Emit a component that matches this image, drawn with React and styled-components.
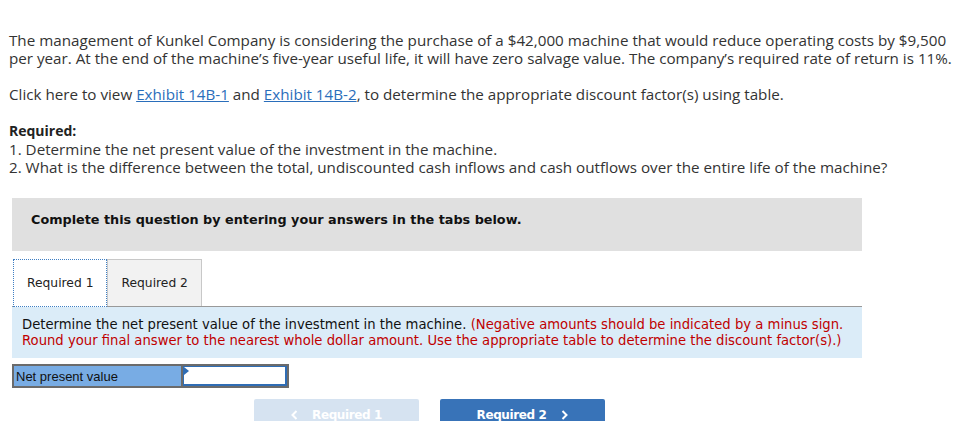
import React from "react";
import styled, { createGlobalStyle } from "styled-components";

const Global = createGlobalStyle`
  html, body { margin: 0; padding: 0; background: #fff; }
  body { overflow: hidden; }
`;

const Page = styled.div`
  padding: 31px 0 0 9px;
  width: 960px;
  box-sizing: border-box;
`;

const Para = styled.p`
  margin: 0 0 ${(p) => p.$mb ?? 18}px 0;
  font-family: "Open Sans", "Lato", sans-serif;
  font-size: 15.2px;
  line-height: 18px;
  color: #333;
`;

const Link = styled.a`
  color: #2a6ebb;
  text-decoration: underline;
  cursor: pointer;
`;

const Strong = styled.strong`
  font-weight: 700;
  font-size: 14px;
  color: #222;
`;

const Question = styled.div`
  margin: 22px 0 0 3px;
  width: 850px;
`;

const Banner = styled.div`
  background: #e0e0e0;
  height: 53px;
  box-sizing: border-box;
  padding: 14px 0 0 19px;
  font-family: "DejaVu Sans", Verdana, sans-serif;
  font-weight: 700;
  font-size: 12.8px;
  line-height: 16px;
  color: #111;
`;

const Tabs = styled.div`
  margin-top: 8px;
  display: flex;
  border-bottom: 1px solid #999;
  height: 47px;
`;

const Tab = styled.div`
  box-sizing: border-box;
  display: flex;
  align-items: center;
  justify-content: center;
  font-family: "DejaVu Sans", Verdana, sans-serif;
  font-size: 12.3px;
  color: #222;
  padding: 0 13px;
  margin-left: ${(p) => (p.$first ? 1 : 0)}px;
  background: ${(p) => (p.$active ? "#fff" : "#f2f2f2")};
  border: ${(p) => (p.$active ? "1px dotted #3f7fc4" : "1px solid #c8c8c8")};
  border-bottom: ${(p) => (p.$active ? "1px dotted #3f7fc4" : "none")};
  margin-bottom: ${(p) => (p.$active ? -1 : 0)}px;
  height: ${(p) => (p.$active ? 48 : 47)}px;
`;

const Instructions = styled.div`
  background: #dbecf8;
  padding: 10px 10px 8px 10px;
  font-family: "DejaVu Sans", Verdana, sans-serif;
  font-size: 13.2px;
  line-height: 16px;
  color: #111;
  height: 51px;
  box-sizing: border-box;
`;

const Red = styled.span`
  color: #c00000;
`;

const AnswerRow = styled.div`
  margin-top: 6px;
  display: flex;
  height: 24px;
`;

const Label = styled.div`
  width: 169px;
  box-sizing: border-box;
  background: #78ace4;
  border: 2px solid #6b6b6b;
  border-right: none;
  font-family: "Liberation Sans", Arial, sans-serif;
  font-size: 13px;
  color: #111;
  display: flex;
  align-items: center;
  padding-left: 2px;
`;

const InputCell = styled.div`
  position: relative;
  width: 108px;
  box-sizing: border-box;
  border: 2px solid #6b6b6b;
  background: #6b6b6b;
  display: flex;
`;

const Input = styled.input`
  flex: 1;
  min-width: 0;
  border: 2px solid #2f6db5;
  border-left-width: 1px;
  border-top-width: 1px;
  background: #fff;
  margin: 0;
  padding: 0;
  outline: none;
`;

const Flag = styled.span`
  position: absolute;
  left: 1px;
  top: 1px;
  width: 0;
  height: 0;
  border-top: 4px solid transparent;
  border-bottom: 4px solid transparent;
  border-left: 5px solid #2f6db5;
`;

const Nav = styled.div`
  margin-top: 11px;
  margin-left: 242px;
  display: flex;
  gap: 21px;
`;

const NavButton = styled.button`
  width: 165px;
  height: 30px;
  border: none;
  border-radius: 2px 2px 0 0;
  background: ${(p) => (p.$disabled ? "#d6e3f1" : "#3873b8")};
  color: #fff;
  font-family: "DejaVu Sans", Verdana, sans-serif;
  font-weight: 700;
  font-size: 12px;
  letter-spacing: -0.4px;
  line-height: 14px;
  display: flex;
  justify-content: center;
  align-items: flex-start;
  padding: 9px 0 0 0;
  gap: ${(p) => (p.$disabled ? 14 : 15)}px;
  cursor: pointer;
`;

const Chevron = styled.svg`
  width: 7px;
  height: 10px;
  margin-top: 2px;
  flex: none;
`;

function ChevronIcon({ dir }) {
  const d = dir === "left" ? "M5.5 1 L1.5 5 L5.5 9" : "M1.5 1 L5.5 5 L1.5 9";
  return (
    <Chevron viewBox="0 0 7 10">
      <path d={d} fill="none" stroke="#fff" strokeWidth="2" />
    </Chevron>
  );
}

export default function App() {
  return (
    <>
      <Global />
      <Page>
        <Para>
          The management of Kunkel Company is considering the purchase of a $42,000 machine that would reduce operating costs by $9,500 per year. At the end of the machine’s five-year useful life, it will have zero salvage value. The company’s required rate of return is 11%.
        </Para>
        <Para>
          Click here to view <Link>Exhibit 14B-1</Link> and <Link>Exhibit 14B-2</Link>, to determine the appropriate discount factor(s) using table.
        </Para>
        <Para $mb={0}>
          <Strong>Required:</Strong>
          <br />
          1. Determine the net present value of the investment in the machine.
          <br />
          2. What is the difference between the total, undiscounted cash inflows and cash outflows over the entire life of the machine?
        </Para>
        <Question>
          <Banner>Complete this question by entering your answers in the tabs below.</Banner>
          <Tabs>
            <Tab $active $first>Required 1</Tab>
            <Tab>Required 2</Tab>
          </Tabs>
          <Instructions>
            Determine the net present value of the investment in the machine.{" "}
            <Red>
              (Negative amounts should be indicated by a minus sign. Round your final answer to the nearest whole dollar amount. Use the appropriate table to determine the discount factor(s).)
            </Red>
          </Instructions>
          <AnswerRow>
            <Label>Net present value</Label>
            <InputCell>
              <Input type="text" />
              <Flag />
            </InputCell>
          </AnswerRow>
          <Nav>
            <NavButton $disabled>
              <ChevronIcon dir="left" />
              <span>Required 1</span>
            </NavButton>
            <NavButton>
              <span>Required 2</span>
              <ChevronIcon dir="right" />
            </NavButton>
          </Nav>
        </Question>
      </Page>
    </>
  );
}
